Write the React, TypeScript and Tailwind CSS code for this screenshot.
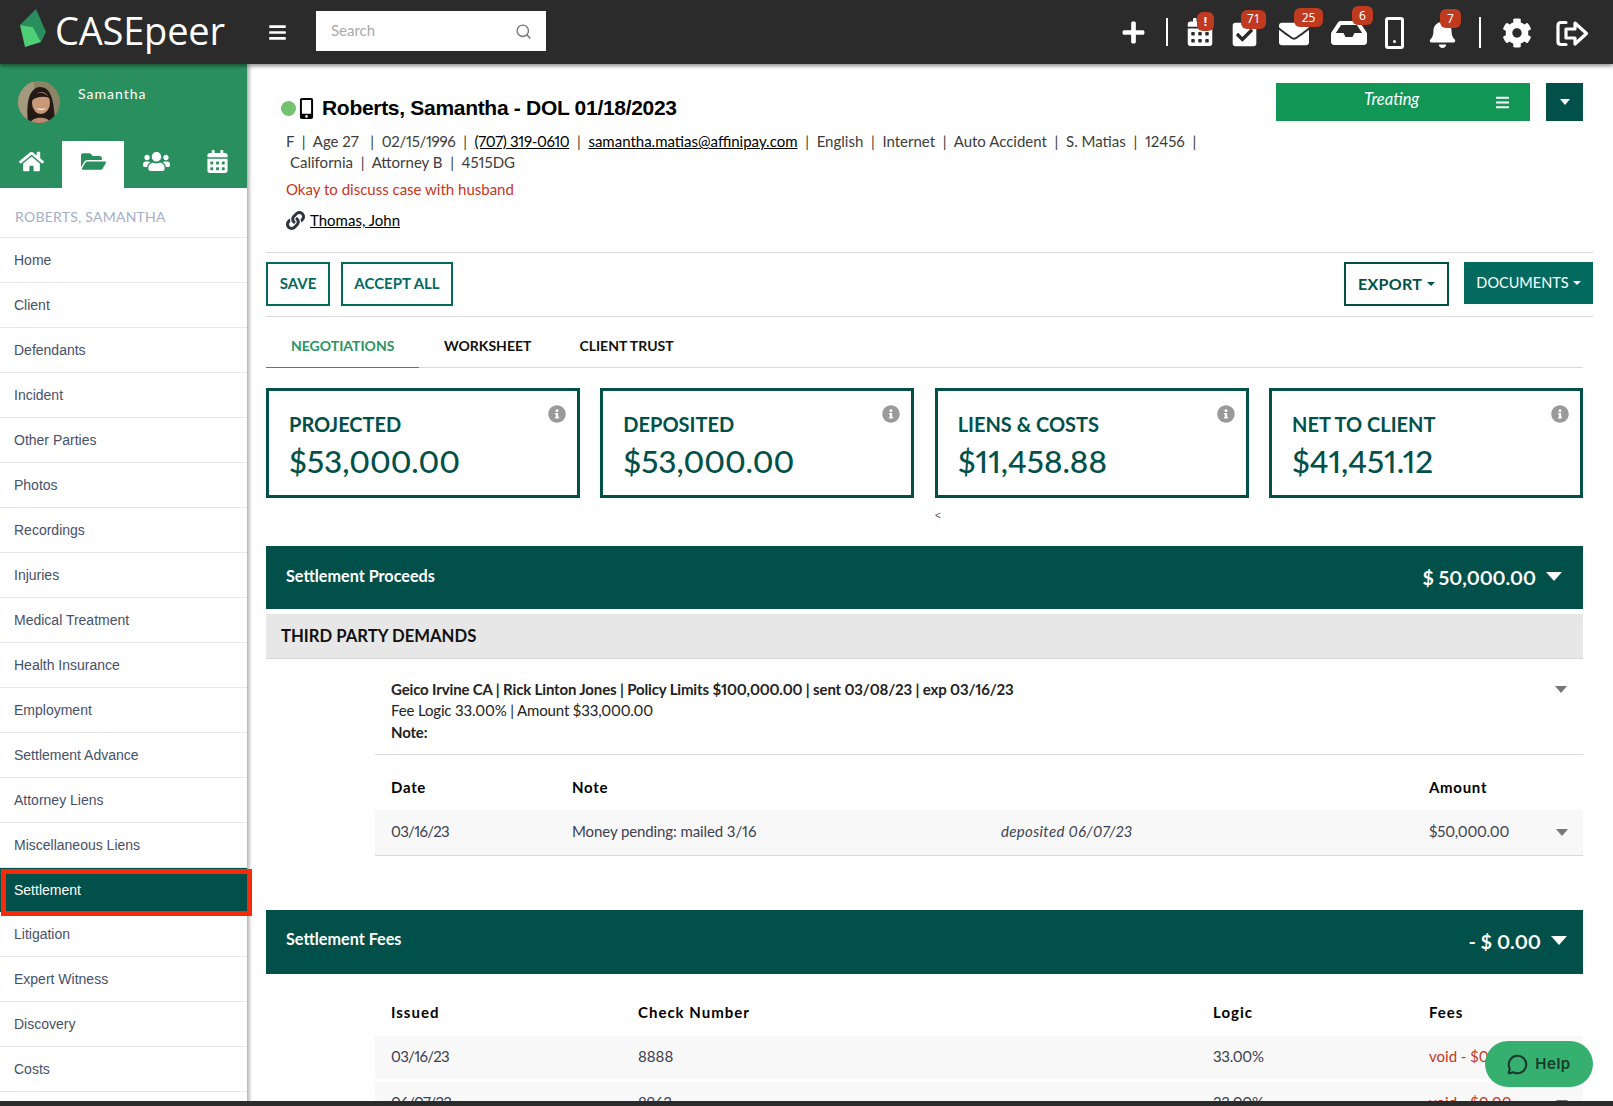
import {
  FaPlus,
  FaCalendarAlt,
  FaCheckSquare,
  FaEnvelope,
  FaInbox,
  FaBell,
  FaCog,
  FaHome,
  FaFolderOpen,
  FaUsers,
  FaLink,
  FaMobileAlt,
  FaInfoCircle,
  FaBars,
} from "react-icons/fa";
import { MessageCircle, Search } from "lucide-react";
import type { ReactNode } from "react";

const NAV = [
  "Home",
  "Client",
  "Defendants",
  "Incident",
  "Other Parties",
  "Photos",
  "Recordings",
  "Injuries",
  "Medical Treatment",
  "Health Insurance",
  "Employment",
  "Settlement Advance",
  "Attorney Liens",
  "Miscellaneous Liens",
  "Settlement",
  "Litigation",
  "Expert Witness",
  "Discovery",
  "Costs",
];

const CARDS = [
  { title: "PROJECTED", amount: "$53,000.00" },
  { title: "DEPOSITED", amount: "$53,000.00" },
  { title: "LIENS & COSTS", amount: "$11,458.88" },
  { title: "NET TO CLIENT", amount: "$41,451.12" },
];

const BODY = "font-['Lato','Open_Sans',sans-serif] proportional-nums";

function Caret({ className }: { className: string }) {
  return <span className={`inline-block h-0 w-0 border-x-transparent border-b-0 ${className}`} />;
}

function Badge({ children, className }: { children: ReactNode; className: string }) {
  return (
    <span
      className={`absolute flex h-[19px] items-center justify-center rounded-[6px] bg-[#bf3a1e] text-[12px] text-white ${className}`}
    >
      {children}
    </span>
  );
}

function Logo() {
  return (
    <svg width="28" height="40" viewBox="0 0 28 40" className="mt-[-8px] shrink-0">
      <polygon points="1,17 17,1 27,24 22,34 14,19" fill="#2a8f5e" />
      <polygon points="1,17 14,19 22,34 6,39" fill="#4fd077" />
    </svg>
  );
}

function Avatar() {
  return (
    <svg width="42" height="42" viewBox="0 0 42 42" className="rounded-full">
      <rect width="42" height="42" fill="#8d8468" />
      <rect x="0" y="0" width="16" height="42" fill="#a39a7e" />
      <path d="M10 42 C8 24 10 7 22 6 C34 6 36 22 37 42 Z" fill="#231a18" />
      <ellipse cx="23" cy="22" rx="9" ry="11" fill="#c99878" />
      <path d="M13 20 C14 11 24 8 32 17 C26 15 19 15 13 20 Z" fill="#231a18" />
      <path d="M18 27 C21 30 26 30 28 27 C26 28 21 28 18 27 Z" fill="#f3e8df" />
      <path d="M12 42 C15 35 30 35 33 42 Z" fill="#b98c72" />
    </svg>
  );
}

function SignOut() {
  return (
    <svg width="33" height="27" viewBox="0 0 33 27" fill="none" stroke="#fff" strokeWidth="3.2" strokeLinejoin="round" strokeLinecap="round">
      <path d="M10 2.5 H5 Q2 2.5 2 5.5 V21.5 Q2 24.5 5 24.5 H10" />
      <path d="M19 3 L30.5 13.5 L19 24 V18 H10 V9 H19 Z" />
    </svg>
  );
}

function TopBar() {
  return (
    <header className="relative z-20 flex h-[64px] shrink-0 items-center bg-[#2b2b2b] shadow-[0_2px_4px_rgba(0,0,0,0.45)]">
      <div className="ml-[19px] flex w-[245px] items-center gap-[8px]">
        <Logo />
        <span className="mt-[-4px] font-['Open_Sans',sans-serif] text-[38px] font-medium leading-none tracking-[-0.2px] text-white">CASEpeer</span>
      </div>
      <FaBars className="ml-[4px] text-[19px] text-white" />
      <div className="ml-[29px] mt-[-2px] flex h-[40px] w-[230px] items-center justify-between bg-white pl-[15px] pr-[14px]">
        <span className={`${BODY} mt-[-2px] text-[15px] text-[#aaaaaa]`}>Search</span>
        <Search size={17} strokeWidth={2} className="text-[#777777]" />
      </div>
      <div className="ml-[576px] flex h-[40px] items-center text-white">
        <FaPlus className="ml-[-1px] text-[25px]" />
        <span className="ml-[20px] h-[28px] w-[2px] bg-white" />
        <span className="relative ml-[18px] inline-flex">
          <FaCalendarAlt className="text-[28px]" />
          <Badge className="left-[11px] top-[-6px] w-[17px] font-bold">!</Badge>
        </span>
        <span className="relative ml-[17px] inline-flex mt-[4px]">
          <FaCheckSquare className="text-[27px]" />
          <Badge className="left-[10px] top-[-11px] w-[25px]">71</Badge>
        </span>
        <span className="relative ml-[21px] inline-flex mt-[4px]">
          <FaEnvelope className="text-[30px]" />
          <Badge className="left-[15px] top-[-11px] w-[29px]">25</Badge>
        </span>
        <span className="relative ml-[22px] inline-flex mt-[2px]">
          <FaInbox className="text-[36px]" />
          <Badge className="left-[21px] top-[-9px] w-[21px]">6</Badge>
        </span>
        <span className="ml-[18px] mt-[2px] flex h-[32px] w-[19px] flex-col items-center rounded-[3px] border-[3px] border-white pt-[20px]">
          <span className="h-[3px] w-[3px] rounded-full bg-white" />
        </span>
        <span className="relative ml-[24px] inline-flex mt-[3px]">
          <FaBell className="text-[29px]" />
          <Badge className="left-[12px] top-[-10px] w-[21px]">7</Badge>
        </span>
        <span className="ml-[22px] h-[31px] w-[2px] bg-white" />
        <FaCog className="ml-[21px] mt-[2px] text-[30px]" />
        <span className="ml-[24px] inline-flex mt-[2px]">
          <SignOut />
        </span>
      </div>
    </header>
  );
}

function Sidebar() {
  return (
    <aside className="relative z-10 w-[247px] shrink-0 bg-white shadow-[2px_0_4px_rgba(0,0,0,0.35)]">
      <div className="h-[124px] bg-[#2a8f5e]">
        <div className="flex h-[77px] pl-[18px] pt-[17px]">
          <Avatar />
          <span className={`${BODY} ml-[18px] mt-[4px] text-[14px] leading-[18px] tracking-[1px] text-white`}>Samantha</span>
        </div>
        <div className="flex h-[47px] items-center text-white">
          <div className="mt-[-6px] flex w-[62px] justify-center">
            <FaHome className="text-[25px]" />
          </div>
          <div className="flex h-full w-[62px] items-center justify-center bg-white pb-[6px] text-[#2a8f5e]">
            <FaFolderOpen className="text-[25px]" />
          </div>
          <div className="mt-[-6px] flex w-[64px] justify-center">
            <FaUsers className="text-[27px]" />
          </div>
          <div className="mt-[-6px] flex w-[59px] justify-center">
            <FaCalendarAlt className="text-[23px]" />
          </div>
        </div>
      </div>
      <div className={`${BODY} flex h-[50px] items-center border-b border-[#e6e7ee] pl-[15px] pt-[8px] text-[14px] tracking-[0.25px] text-[#a4aec6]`}>
        ROBERTS, SAMANTHA
      </div>
      <nav className="font-['Liberation_Sans',sans-serif] text-[14px]">
        {NAV.map((item) =>
          item === "Settlement" ? (
            <div key={item} className="flex h-[44px] items-start bg-[#02504a] pl-[14px] pt-[13px] leading-[18px] text-white">
              {item}
            </div>
          ) : (
            <div key={item} className="flex h-[45px] items-center border-b border-[#e6e7ee] pl-[14px] text-[#46506a]">
              {item}
            </div>
          ),
        )}
      </nav>
      <div className="pointer-events-none absolute left-[1px] top-[805px] h-[47px] w-[251px] border-[5px] border-[#f42c0c]" />
    </aside>
  );
}

function PatientHeader() {
  return (
    <div className="flex h-[189px] justify-between border-b border-[#d9d9d9] pr-[10px]">
      <div>
        <div className="mt-[29px] flex h-[30px] items-center pl-[15px]">
          <span className="h-[15px] w-[15px] rounded-full bg-[#74c16f]" />
          <FaMobileAlt className="text-[21px] text-black" />
          <span className="ml-[5px] font-['Liberation_Sans',sans-serif] text-[21px] font-bold tracking-[-0.3px] text-black">
            Roberts, Samantha - DOL 01/18/2023
          </span>
        </div>
        <div className={`${BODY} mt-[8px] whitespace-pre pl-[20px] text-[15px] leading-[21px] text-[#3c3c3c]`}>
          <div>
            {"F  |  Age 27   |  "}
            <span className="tracking-[-0.3px]">02/15/1996</span>
            {"  |  "}
            <span className="tracking-[-0.35px] text-black underline">(707) 319-0610</span>
            {"  |  "}
            <span className="text-black underline">samantha.matias@affinipay.com</span>
            {"  |  English  |  Internet  |  Auto Accident  |  S. Matias  |  12456  |"}
          </div>
          <div className="pl-[4px]">California  |  Attorney B  |  4515DG</div>
          <div className="mt-[6px] text-[#c9341c]">Okay to discuss case with husband</div>
          <div className="mt-[9px] flex h-[22px] items-center">
            <FaLink className="text-[19px] text-[#2f3640]" />
            <span className="ml-[5px] text-black underline">Thomas, John</span>
          </div>
        </div>
      </div>
      <div className="mt-[19px] flex h-[38px] text-white">
        <div className="flex w-[254px] items-center bg-[#129656]">
          <span className={`${BODY} ml-[88px] mt-[-5px] w-[86px] text-[16.5px] italic`}>Treating</span>
          <FaBars className="ml-[45px] text-[15px]" />
        </div>
        <div className="ml-[16px] flex w-[37px] items-center justify-center bg-[#02504a]">
          <Caret className="border-x-[5px] border-t-[6px] border-t-white" />
        </div>
      </div>
    </div>
  );
}

function ActionRow() {
  return (
    <div className={`${BODY} flex h-[64px] items-start justify-between border-b border-[#d9d9d9] pt-[9px] text-[15px] font-bold`}>
      <div className="flex gap-[11px] text-[#046a5f]">
        <button className="h-[44px] w-[64px] border-[2px] border-[#046a5f] pb-[2px]">SAVE</button>
        <button className="h-[44px] w-[112px] border-[2px] border-[#046a5f] pb-[2px]">ACCEPT ALL</button>
      </div>
      <div className="flex gap-[15px]">
        <button className="flex h-[44px] w-[105px] items-center justify-center gap-[5px] border-[2px] border-[#02504a] text-[16px] tracking-[0.3px] text-[#02504a]">
          EXPORT
          <Caret className="border-x-[4px] border-t-[4px] border-t-[#02504a]" />
        </button>
        <button className="flex h-[42px] w-[129px] items-center justify-center gap-[4px] bg-[#046a5f] text-[14.5px] font-normal text-white">
          DOCUMENTS
          <Caret className="border-x-[4px] border-t-[4px] border-t-white" />
        </button>
      </div>
    </div>
  );
}

function Tabs() {
  return (
    <div className={`${BODY} mr-[10px] flex h-[51px] items-center border-b border-[#d9d9dd] text-[14px] font-bold text-[#111111]`}>
      <div className="relative flex h-full w-[153px] items-center pl-[25px] pt-[7px] text-[#2a9462]">
        NEGOTIATIONS
        <span className="absolute bottom-[-1px] left-0 h-[1px] w-full bg-[#2a9462]" />
      </div>
      <div className="ml-[25px] pt-[7px]">WORKSHEET</div>
      <div className="ml-[48px] pt-[7px]">CLIENT TRUST</div>
    </div>
  );
}

function Cards() {
  return (
    <div className="mr-[10px] mt-[20px] grid grid-cols-4 gap-[20.3px]">
      {CARDS.map((card) => (
        <div key={card.title} className={`${BODY} relative h-[110px] border-[3px] border-[#02504a] pl-[20px] pt-[21px] text-[#02504a]`}>
          <div className="text-[20px] font-bold leading-[25px]">{card.title}</div>
          <div className="mt-[4px] text-[31.5px] font-medium leading-[40px]">{card.amount}</div>
          <FaInfoCircle className="absolute right-[11px] top-[14px] text-[18px] text-[#9a9a9a]" />
        </div>
      ))}
    </div>
  );
}

function Bar({ title, amount, className, titleClass, amountClass }: { title: string; amount: string; className: string; titleClass: string; amountClass: string }) {
  return (
    <div className={`${BODY} flex items-center justify-between bg-[#02504a] pl-[20px] text-white ${className}`}>
      <span className={`text-[16.2px] font-bold ${titleClass}`}>{title}</span>
      <span className="flex items-center gap-[10px]">
        <span className={`font-bold ${amountClass}`}>{amount}</span>
        <Caret className="mt-[-3px] border-x-[8px] border-t-[9px] border-t-white" />
      </span>
    </div>
  );
}

function Proceeds() {
  return (
    <div className="mr-[10px]">
      <div className="h-[48px] pl-[669px] pt-[11px] font-['Liberation_Sans',sans-serif] text-[10px] leading-[14px] text-[#555555]">&lt;</div>
      <Bar title="Settlement Proceeds" amount="$ 50,000.00" className="h-[63px] pr-[21px]" titleClass="mt-[-3px]" amountClass="text-[19.5px]" />
      <div className={`${BODY} mt-[5px] flex h-[45px] items-center border-b border-[#d9d9d9] bg-[#e7e7e7] pl-[15px] pt-[1px] text-[16.7px] font-bold text-[#111111]`}>
        THIRD PARTY DEMANDS
      </div>
      <div className={`${BODY} ml-[109px] text-[15px] text-[#222222]`}>
        <div className="relative h-[96px] border-b border-[#d9d9d9] pl-[16px] pt-[20px] leading-[21px] tracking-[-0.15px]">
          <div className="font-bold">Geico Irvine CA | Rick Linton Jones | Policy Limits $100,000.00 | sent 03/08/23 | exp 03/16/23</div>
          <div>Fee Logic 33.00% | Amount $33,000.00</div>
          <div className="mt-[1px] font-bold">Note:</div>
          <Caret className="absolute right-[16px] top-[27px] border-x-[6px] border-t-[7px] border-t-[#777777]" />
        </div>
        <div className="grid h-[55px] grid-cols-[197px_429px_428px_1fr] items-center pt-[10px] font-bold tracking-[0.7px] text-black">
          <span className="pl-[16px]">Date</span>
          <span>Note</span>
          <span />
          <span>Amount</span>
        </div>
        <div className="grid h-[46px] grid-cols-[197px_429px_428px_127px_1fr] items-center border-b border-[#d9d9d9] bg-[#f8f8f8] pb-[3px] text-[#3d4152]">
          <span className="pl-[16px] tracking-[-0.7px]">03/16/23</span>
          <span className="tracking-[-0.1px]">Money pending: mailed 3/16</span>
          <span className="italic tracking-[0.35px]">deposited 06/07/23</span>
          <span className="tracking-[-0.2px]">$50,000.00</span>
          <Caret className="mt-[3px] border-x-[6px] border-t-[7px] border-t-[#777777]" />
        </div>
      </div>
    </div>
  );
}

function Fees() {
  const rows = [
    { issued: "03/16/23", check: "8888" },
    { issued: "06/07/23", check: "8963" },
  ];
  return (
    <div className="mr-[10px] mt-[54px]">
      <Bar title="Settlement Fees" amount="- $ 0.00" className="h-[64px] pr-[16px]" titleClass="mt-[-6px]" amountClass="text-[19.8px]" />
      <div className={`${BODY} ml-[109px] text-[15px]`}>
        <div className="grid h-[62px] grid-cols-[263px_575px_216px_1fr] items-center pt-[14px] font-bold tracking-[1px] text-black">
          <span className="pl-[16px]">Issued</span>
          <span>Check Number</span>
          <span>Logic</span>
          <span>Fees</span>
        </div>
        {rows.map((row) => (
          <div key={row.issued} className="mb-[3px] grid h-[43px] grid-cols-[263px_575px_216px_127px_1fr] items-center bg-[#f8f8f8] pb-[2px] text-[#3d4152]">
            <span className="pl-[16px] tracking-[-0.7px]">{row.issued}</span>
            <span>{row.check}</span>
            <span className="tracking-[-0.3px]">33.00%</span>
            <span className="text-[#c9341c]">void - $0.00</span>
            <Caret className="mt-[2px] border-x-[6px] border-t-[7px] border-t-[#777777]" />
          </div>
        ))}
      </div>
    </div>
  );
}

export default function App() {
  return (
    <div className="relative flex h-[1106px] w-[1613px] flex-col overflow-hidden bg-white">
      <TopBar />
      <div className="flex min-h-0 flex-1">
        <Sidebar />
        <main className="min-w-0 flex-1 pl-[19px] pr-[20px]">
          <PatientHeader />
          <ActionRow />
          <Tabs />
          <Cards />
          <Proceeds />
          <Fees />
        </main>
      </div>
      <button className="absolute bottom-[19px] right-[20px] z-30 flex h-[46px] w-[108px] items-center justify-center gap-[7px] rounded-[23px] bg-[#36b06f] font-['Inter',sans-serif] text-[15px] font-semibold tracking-[0.5px] text-[#173a2a]">
        <MessageCircle size={21} strokeWidth={2.4} />
        Help
      </button>
      <div className="absolute bottom-0 left-0 z-40 h-[5px] w-full bg-[#2b2b2b]" />
    </div>
  );
}
